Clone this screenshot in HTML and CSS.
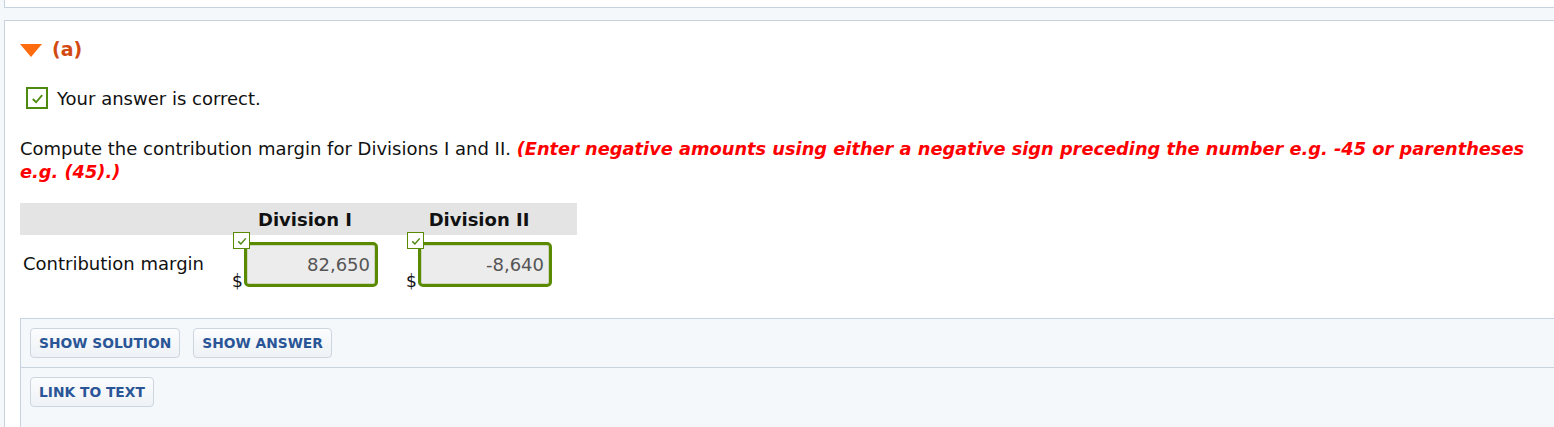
FILE: index.html
```html
<!DOCTYPE html>
<html>
<head>
<meta charset="utf-8">
<link rel="stylesheet" href="styles.css">
</head>
<body>
<div class="prev-box"></div>
<div class="part-box">
  <div class="part-head">
    <span class="tri"></span>
    <span class="part-label">(a)</span>
  </div>
  <div class="correct">
    <span class="chk-big"><svg viewBox="0 0 16 16" width="15" height="15"><path d="M3 8.5 L6.5 12 L13 4.5" fill="none" stroke="#4f8a10" stroke-width="2"/></svg></span>
    <span>Your answer is correct.</span>
  </div>
  <p class="question">Compute the contribution margin for Divisions I and II. <em class="hint">(Enter negative amounts using either a negative sign preceding the number e.g. -45 or parentheses e.g. (45).)</em></p>
  <div class="grid">
    <div class="hdr"></div>
    <div class="hdr hdr-1">Division I</div>
    <div class="hdr hdr-2">Division II</div>
    <div class="label">Contribution margin</div>
    <div class="cell">
      <span class="dollar">$</span>
      <span class="field">82,650</span>
      <span class="chk-sm"><svg viewBox="0 0 16 16" width="12" height="12"><path d="M3 8.5 L6.5 12 L13 4.5" fill="none" stroke="#4f8a10" stroke-width="2"/></svg></span>
    </div>
    <div class="cell">
      <span class="dollar">$</span>
      <span class="field">-8,640</span>
      <span class="chk-sm"><svg viewBox="0 0 16 16" width="12" height="12"><path d="M3 8.5 L6.5 12 L13 4.5" fill="none" stroke="#4f8a10" stroke-width="2"/></svg></span>
    </div>
  </div>
  <div class="actions">
    <div class="row">
      <button class="btn">SHOW SOLUTION</button>
      <button class="btn">SHOW ANSWER</button>
    </div>
    <div class="row sep">
      <button class="btn">LINK TO TEXT</button>
    </div>
  </div>
</div>
</body>
</html>
```
FILE: styles.css
```css
html, body {
  margin: 0;
  padding: 0;
  background: #f5f8fb;
  font-family: "DejaVu Sans", Verdana, sans-serif;
  color: #111;
  overflow: hidden;
}
.prev-box {
  margin-left: 4px;
  height: 8px;
  background: #fff;
  border-left: 1px solid #c8d3e0;
  border-bottom: 1px solid #c8d3e0;
  box-sizing: border-box;
}
.part-box {
  margin-top: 12px;
  margin-left: 4px;
  background: #fff;
  border-left: 1px solid #c8d3e0;
  border-top: 1px solid #c8d3e0;
  padding: 17px 0 0 15px;
  height: 500px;
}
.part-head {
  display: flex;
  align-items: center;
  gap: 10px;
  height: 22px;
}
.tri {
  width: 0;
  height: 0;
  border-left: 11px solid transparent;
  border-right: 11px solid transparent;
  border-top: 13px solid #ff6b0f;
  margin-top: 2px;
}
.part-label {
  color: #d24a12;
  font-weight: bold;
  font-size: 19px;
}
.correct {
  display: flex;
  align-items: center;
  gap: 9px;
  margin-top: 27px;
  margin-left: 6px;
  font-size: 18px;
}
.chk-big {
  width: 18px;
  height: 18px;
  border: 2px solid #4f8a10;
  display: flex;
  align-items: center;
  justify-content: center;
  background: #fff;
}
.question {
  margin: 28px 0 0 0;
  font-size: 18px;
  line-height: 23px;
}
.hint {
  color: #ff0000;
  font-weight: bold;
  font-size: 17.8px;
}
.grid {
  display: grid;
  grid-template-columns: 212px 174px 171px;
  margin-top: 20px;
  width: 557px;
}
.hdr {
  background: #e4e4e4;
  height: 32px;
  font-weight: bold;
  font-size: 18px;
  display: flex;
  align-items: center;
  justify-content: center;
}
.hdr-1 {
  padding-right: 28px;
}
.hdr-2 {
  padding-right: 25px;
}
.label {
  font-size: 18px;
  padding-left: 3px;
  padding-top: 18px;
}
.cell {
  position: relative;
  display: flex;
  align-items: flex-end;
  padding-top: 7px;
}
.dollar {
  font-size: 17px;
  width: 12px;
  line-height: 18px;
  margin-bottom: -3px;
}
.field {
  box-sizing: border-box;
  width: 134px;
  height: 45px;
  border: 3px solid #5a8a00;
  border-radius: 5px;
  background: #ececec;
  color: #555;
  font-size: 18px;
  display: flex;
  align-items: center;
  justify-content: flex-end;
  padding-right: 5px;
  box-shadow: inset 0 0 0 1px #cfd6c0;
}
.chk-sm {
  position: absolute;
  left: 1px;
  top: -3px;
  width: 15px;
  height: 15px;
  border: 1px solid #5a8a00;
  background: #fff;
  display: flex;
  align-items: center;
  justify-content: center;
}
.actions {
  margin-top: 31px;
  background: #f5f8fb;
  border-left: 1px solid #c8d3e0;
  border-top: 1px solid #c8d3e0;
}
.row {
  display: flex;
  gap: 13px;
  padding: 9px 10px 9px 9px;
}
.sep {
  border-top: 1px solid #c8d3e0;
  padding-bottom: 60px;
}
.btn {
  font-family: "DejaVu Sans", Verdana, sans-serif;
  font-weight: bold;
  font-size: 13.8px;
  color: #2a5596;
  background: linear-gradient(#fbfcfd, #eef2f6);
  border: 1px solid #cdd6e0;
  border-radius: 4px;
  height: 30px;
  padding: 0 8px;
  cursor: pointer;
}
```
